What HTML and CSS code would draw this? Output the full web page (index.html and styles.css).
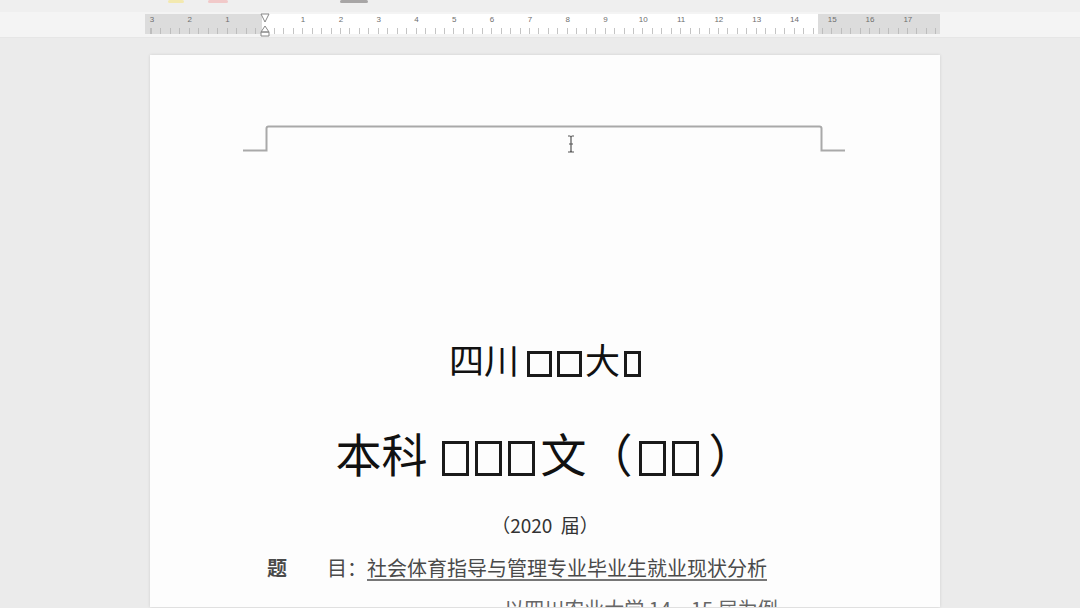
FILE: index.html
```html
<!DOCTYPE html>
<html lang="zh">
<head>
<meta charset="utf-8">
<link rel="stylesheet" href="styles.css">
</head>
<body>
<div class="toolbar">
  <span class="blob yellow"></span>
  <span class="blob red"></span>
  <span class="blob dark"></span>
</div>
<div class="ruler">
  <div class="track">
    <div class="cells">
      <span class="cell">3</span><span class="cell">2</span><span class="cell">1</span><span class="cell"></span>
      <span class="cell">1</span><span class="cell">2</span><span class="cell">3</span><span class="cell">4</span>
      <span class="cell">5</span><span class="cell">6</span><span class="cell">7</span><span class="cell">8</span>
      <span class="cell">9</span><span class="cell">10</span><span class="cell">11</span><span class="cell">12</span>
      <span class="cell">13</span><span class="cell">14</span><span class="cell">15</span><span class="cell">16</span>
      <span class="cell">17</span>
    </div>
    <div class="ticks"></div>
    <svg class="indent" width="10" height="24" viewBox="0 0 10 24">
      <path d="M1 1 L9 1 L5 9 Z M5 13 L9 19 L1 19 Z M1 19 H9 V23 H1 Z" fill="#fff" stroke="#888" stroke-width="1"/>
    </svg>
  </div>
</div>
<div class="workspace">
  <div class="page">
    <svg class="header-mark" width="604" height="28" viewBox="0 0 604 28">
      <path d="M0 25.5 H23.5 V3.5 Q23.5 1.5 25.5 1.5 H576.5 Q578.5 1.5 578.5 3.5 V25.5 H602" fill="none" stroke="#a9a9a9" stroke-width="2"/>
    </svg>
    <svg class="ibeam" width="8" height="18" viewBox="0 0 8 18">
      <path d="M1 1 H3 Q4 1 4 3 V15 Q4 17 3 17 H1 M7 1 H5 Q4 1 4 3 M4 15 Q4 17 5 17 H7 M2 9 H6" fill="none" stroke="#555" stroke-width="1.2"/>
    </svg>
    <h1 class="title1">四川<span class="box b1"></span><span class="box b2"></span>大<span class="box b3"></span></h1>
    <h2 class="title2">本科<span class="box c1"></span><span class="box c2"></span><span class="box c2"></span>文<span class="lp">（</span><span class="box c3"></span><span class="box c4"></span><span class="rp">）</span></h2>
    <p class="year">（2020&nbsp;&nbsp;届）</p>
    <div class="subject">
      <span class="label">题</span>
      <span class="label second">目：</span>
      <span class="subject-text">社会体育指导与管理专业毕业生就业现状分析</span>
    </div>
    <p class="sub">——以四川农业大学 14—15 届为例</p>
  </div>
</div>
</body>
</html>
```
FILE: styles.css
```css
* { box-sizing: border-box; }
html, body {
  margin: 0;
  padding: 0;
  width: 1080px;
  height: 608px;
  overflow: hidden;
  background: #ebebeb;
  font-family: "Noto Sans CJK SC", "Noto Sans", sans-serif;
}
.toolbar {
  height: 12px;
  background: #efefef;
  display: flex;
  align-items: flex-start;
}
.blob { display: block; height: 3px; border-radius: 2px; }
.yellow { width: 16px; margin-left: 168px; background: #f3e9b0; }
.red { width: 20px; margin-left: 24px; background: #f1c9c9; }
.dark { width: 28px; margin-left: 112px; background: #a8a6a6; height: 3px; }
.ruler {
  height: 26px;
  background: #f4f4f4;
  padding-top: 2px;
  border-bottom: 1px solid #e6e6e6;
}
.track {
  position: relative;
  margin-left: 133px;
  width: 808px;
  height: 20px;
  background: linear-gradient(to right,
    transparent 0, transparent 12px,
    #dcdcdc 12px, #dcdcdc 129px,
    #ffffff 129px, #ffffff 685px,
    #dcdcdc 685px, #dcdcdc 807px,
    transparent 807px);
}
.cells { display: flex; }
.cell {
  flex: 0 0 37.8px;
  text-align: center;
  font-family: "Liberation Sans", sans-serif;
  font-size: 8px;
  line-height: 12px;
  color: #6e6e6e;
}
.ticks {
  margin-left: 12px;
  width: 795px;
  height: 6px;
  margin-top: 2px;
  background:
    repeating-linear-gradient(to right, #b5b5b5 0, #b5b5b5 1px, transparent 1px, transparent 9.45px);
  background-position: 6px 0;
  opacity: 0.8;
}
.indent {
  position: absolute;
  left: 127px;
  top: -1px;
}
.workspace {
  padding-left: 150px;
  padding-top: 17px;
}
.page {
  position: relative;
  width: 790px;
  height: 552px;
  overflow: hidden;
  background: #fdfdfd;
  box-shadow: 0 0 3px rgba(0,0,0,0.12);
  display: flex;
  flex-direction: column;
  align-items: center;
  padding-top: 70px;
}
.page > * { flex-shrink: 0; }
.header-mark { display: block; margin-left: 0; }
.ibeam { position: absolute; left: 417px; top: 80px; }
.box {
  display: inline-block;
  border: 3px solid #1a1a1a;
}
.title1 {
  margin: 186px 0 0;
  font-size: 35px;
  font-weight: 400;
  line-height: 40px;
  color: #111;
  white-space: nowrap;
}
.title1 .box { height: 26px; vertical-align: -3px; }
.b1 { width: 25px; margin: 0 5px 0 8px; }
.b2 { width: 25px; margin: 0 3px 0 0; }
.b3 { width: 17px; margin: 0 0 0 4px; }
.title2 {
  margin: 47px 0 0;
  font-size: 46px;
  font-weight: 400;
  line-height: 52px;
  color: #111;
  white-space: nowrap;
}
.title2 .box { height: 35px; width: 27px; vertical-align: -4px; }
.c1 { margin: 0 6px 0 14px; }
.c2 { margin: 0 6px 0 0; }
.c3 { margin: 0 6px 0 6px; }
.c4 { margin: 0 10px 0 0; }
.year {
  margin: 36px 0 0;
  font-size: 19px;
  line-height: 22px;
  color: #333;
}
.subject {
  margin: 19px 0 0 117px;
  align-self: flex-start;
  display: flex;
  align-items: baseline;
  font-size: 20px;
  line-height: 26px;
  color: #4a4a4a;
}
.label { font-weight: 700; }
.second { margin-left: 40px; font-weight: 400; }
.subject-text {
  text-decoration: underline;
  text-underline-offset: 3px;
  text-decoration-color: #777;
}
.sub {
  margin: 15px 0 0 152px;
  font-size: 20px;
  line-height: 26px;
  color: #666;
  white-space: nowrap;
}
```
